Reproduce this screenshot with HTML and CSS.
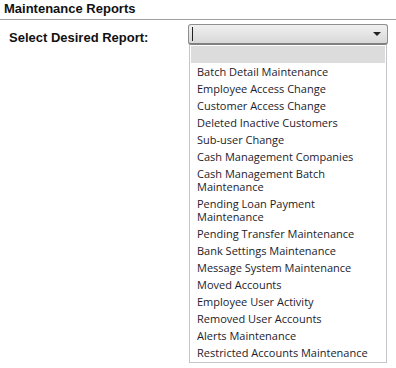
FILE: index.html
```html
<!DOCTYPE html>
<html lang="en">
<head>
<meta charset="UTF-8">
<title>Maintenance Reports</title>
<link rel="stylesheet" href="styles.css">
</head>
<body>
  <h2 class="section-title">Maintenance Reports</h2>
  <div class="report-row">
    <label class="report-label" for="reportSelect">Select Desired Report:</label>
    <div class="picker" id="reportSelect">
      <div class="picker-box">
        <span class="caret-line"></span>
        <span class="arrow"></span>
      </div>
      <ul class="picker-list">
        <li class="blank">&nbsp;</li>
        <li>Batch Detail Maintenance</li>
        <li>Employee Access Change</li>
        <li>Customer Access Change</li>
        <li>Deleted Inactive Customers</li>
        <li>Sub-user Change</li>
        <li>Cash Management Companies</li>
        <li>Cash Management Batch Maintenance</li>
        <li>Pending Loan Payment Maintenance</li>
        <li>Pending Transfer Maintenance</li>
        <li>Bank Settings Maintenance</li>
        <li>Message System Maintenance</li>
        <li>Moved Accounts</li>
        <li>Employee User Activity</li>
        <li>Removed User Accounts</li>
        <li>Alerts Maintenance</li>
        <li>Restricted Accounts Maintenance</li>
      </ul>
    </div>
  </div>
</body>
</html>
```

FILE: styles.css
```css
body {
  margin: 0;
  background-color: #fff;
  font-family: "Liberation Sans", Arial, sans-serif;
  color: #111;
}
.section-title {
  margin: 0;
  padding: 2px 4px 3px;
  font-size: 13px;
  font-weight: bold;
  line-height: 14px;
  border-bottom: 1px solid #a0a0a0;
}
.report-row {
  display: flex;
  align-items: flex-start;
  padding-top: 4px;
}
.report-label {
  width: 179px;
  padding: 6px 0 0 9px;
  font-size: 13px;
  font-weight: bold;
  line-height: 15px;
}
.picker {
  width: 200px;
}
.picker-box {
  display: flex;
  align-items: center;
  justify-content: space-between;
  height: 18px;
  padding: 0 6px 0 3px;
  border: 1px solid #8f8f8f;
  border-bottom: 2px solid #808080;
  border-radius: 3px;
  background: linear-gradient(#f0f0f0, #d8d8d8);
}
.caret-line {
  width: 1px;
  height: 14px;
  background-color: #222;
}
.arrow {
  width: 0;
  height: 0;
  border-left: 4px solid transparent;
  border-right: 4px solid transparent;
  border-top: 4px solid #222;
}
.picker-list {
  list-style: none;
  margin: 0 1px;
  padding: 1px;
  border: 1px solid #c4c4cc;
  border-top: none;
  font-family: "Open Sans", "Noto Sans", sans-serif;
  font-size: 11px;
  line-height: 13px;
  color: #1c1c2c;
}
.picker-list li {
  padding: 2px 12px 2px 6px;
}
.picker-list .blank {
  height: 13px;
  background-color: #dcdcdc;
}
```
